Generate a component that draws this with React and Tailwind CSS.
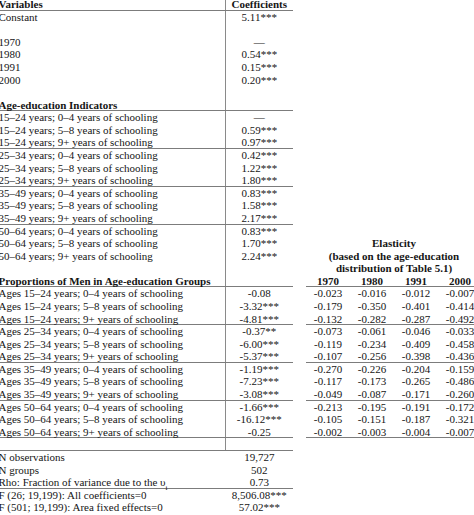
import React from "react";

const left = [
  ["Variables", "Coefficients", true, true],
  ["Constant", "5.11***"],
  ["", ""],
  ["1970", "—"],
  ["1980", "0.54***"],
  ["1991", "0.15***"],
  ["2000", "0.20***"],
  ["", ""],
  ["Age-education Indicators", "", true, true],
  ["15–24 years; 0–4 years of schooling", "—"],
  ["15–24 years; 5–8 years of schooling", "0.59***"],
  ["15–24 years; 9+ years of schooling", "0.97***", false, true],
  ["25–34 years; 0–4 years of schooling", "0.42***"],
  ["25–34 years; 5–8 years of schooling", "1.22***"],
  ["25–34 years; 9+ years of schooling", "1.80***", false, true],
  ["35–49 years; 0–4 years of schooling", "0.83***"],
  ["35–49 years; 5–8 years of schooling", "1.58***"],
  ["35–49 years; 9+ years of schooling", "2.17***", false, true],
  ["50–64 years; 0–4 years of schooling", "0.83***"],
  ["50–64 years; 5–8 years of schooling", "1.70***"],
  ["50–64 years; 9+ years of schooling", "2.24***"],
  ["", ""],
  ["Proportions of Men in Age-education Groups", "", true, true],
  ["Ages 15–24 years; 0–4 years of schooling", "-0.08"],
  ["Ages 15–24 years; 5–8 years of schooling", "-3.32***"],
  ["Ages 15–24 years; 9+ years of schooling", "-4.81***", false, true],
  ["Ages 25–34 years; 0–4 years of schooling", "-0.37**"],
  ["Ages 25–34 years; 5–8 years of schooling", "-6.00***"],
  ["Ages 25–34 years; 9+ years of schooling", "-5.37***", false, true],
  ["Ages 35–49 years; 0–4 years of schooling", "-1.19***"],
  ["Ages 35–49 years; 5–8 years of schooling", "-7.23***"],
  ["Ages 35–49 years; 9+ years of schooling", "-3.08***", false, true],
  ["Ages 50–64 years; 0–4 years of schooling", "-1.66***"],
  ["Ages 50–64 years; 5–8 years of schooling", "-16.12***"],
  ["Ages 50–64 years; 9+ years of schooling", "-0.25", false, true],
  ["", "", false, true],
  ["N observations", "19,727"],
  ["N groups", "502"],
  ["RHO", "0.73", false, true],
  ["F (26; 19,199): All coefficients=0", "8,506.08***"],
  ["F (501; 19,199): Area fixed effects=0", "57.02***"],
];

const elast = [
  [["-0.023", "-0.016", "-0.012", "-0.007"], false],
  [["-0.179", "-0.350", "-0.401", "-0.414"], false],
  [["-0.132", "-0.282", "-0.287", "-0.492"], true],
  [["-0.073", "-0.061", "-0.046", "-0.033"], false],
  [["-0.119", "-0.234", "-0.409", "-0.458"], false],
  [["-0.107", "-0.256", "-0.398", "-0.436"], true],
  [["-0.270", "-0.226", "-0.204", "-0.159"], false],
  [["-0.117", "-0.173", "-0.265", "-0.486"], false],
  [["-0.049", "-0.087", "-0.171", "-0.260"], true],
  [["-0.213", "-0.195", "-0.191", "-0.172"], false],
  [["-0.105", "-0.151", "-0.187", "-0.321"], false],
  [["-0.002", "-0.003", "-0.004", "-0.007"], true],
];

export default function App() {
  return (
    <div
      className="w-[474px] h-[515px] overflow-hidden bg-white text-[#151515] text-[11px] leading-[12.58px]"
      style={{ fontFamily: '"Liberation Serif", "Times New Roman", serif' }}
    >
      <div className="flex mt-[-1.9px] ml-[-1.5px]">
        <div className="w-[294.5px] shrink-0 flex flex-col">
          {left.map(([label, value, bold, line], i) => (
            <div
              key={i}
              className={
                "flex h-[12.58px] " +
                (line ? "border-b border-[#7c7c7c] " : "") +
                (bold ? "font-bold" : "")
              }
            >
              <div
                className={
                  "w-[227px] shrink-0 whitespace-nowrap " +
                  (i <= 35 ? "border-r border-[#8a8a8a]" : "")
                }
              >
                {label === "RHO" ? (
                  <span>
                    Rho: Fraction of variance due to the υ
                    <sub className="text-[7px] leading-none align-[-2px]">i</sub>
                  </span>
                ) : (
                  label
                )}
              </div>
              <div className="flex-1 text-center whitespace-nowrap">{value}</div>
            </div>
          ))}
        </div>
        <div className="w-[176px] shrink-0 ml-[13px] mt-[239px] flex flex-col">
          <div className="font-bold text-center whitespace-nowrap">
            <div className="h-[12.58px]">Elasticity</div>
            <div className="h-[12.58px]">(based on the age-education</div>
            <div className="h-[12.58px]">distribution of Table 5.1)</div>
          </div>
          <div className="grid grid-cols-4 h-[12.58px] border-b border-[#7c7c7c] font-bold text-center">
            <div>1970</div>
            <div>1980</div>
            <div>1991</div>
            <div>2000</div>
          </div>
          {elast.map(([vals, line], i) => (
            <div
              key={i}
              className={
                "grid grid-cols-4 h-[12.58px] text-center " +
                (line ? "border-b border-[#7c7c7c]" : "")
              }
            >
              {vals.map((v, j) => (
                <div key={j}>{v}</div>
              ))}
            </div>
          ))}
        </div>
      </div>
    </div>
  );
}
